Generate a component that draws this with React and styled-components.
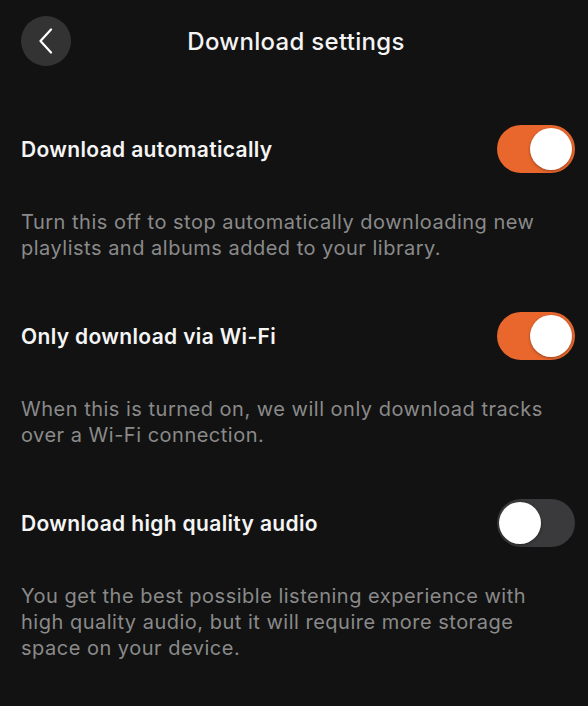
import { useState } from "react";
import styled, { createGlobalStyle } from "styled-components";

const GlobalStyle = createGlobalStyle`
  html, body {
    margin: 0;
    padding: 0;
    background: #121212;
  }
  body {
    font-family: Inter, "Noto Sans", sans-serif;
    -webkit-font-smoothing: antialiased;
  }
`;

/* ---------- header ---------- */

const Page = styled.div`
  min-height: 100vh;
  background: #121212;
  color: #fff;
  padding: 0 13px 0 21px;
  box-sizing: border-box;
`;

const Header = styled.header`
  height: 82px;
  display: grid;
  grid-template-columns: 50px 1fr 54px;
  align-items: center;
`;

const BackButton = styled.button`
  width: 50px;
  height: 50px;
  border-radius: 50%;
  border: none;
  background: #333333;
  display: grid;
  place-items: center;
  padding: 0;
  cursor: pointer;
`;

const Title = styled.h1`
  margin: 0;
  text-align: center;
  font-size: 24px;
  font-weight: 500;
  letter-spacing: 0.3px;
  color: #f4f4f4;
`;

/* ---------- settings ---------- */

const List = styled.div`
  display: flex;
  flex-direction: column;
  gap: 51px;
  padding-top: 43px;
`;

const Section = styled.section`
  display: flex;
  flex-direction: column;
  gap: 36px;
`;

const Row = styled.div`
  display: flex;
  align-items: center;
  justify-content: space-between;
  height: 48px;
`;

const Label = styled.span`
  font-size: 21px;
  font-weight: 600;
  letter-spacing: 0.35px;
  color: #f5f5f5;
`;

const Description = styled.p`
  margin: 0;
  font-size: 20px;
  line-height: 26px;
  letter-spacing: 0.5px;
  color: #8a8a8a;
  padding-right: 20px;
`;

const Track = styled.button`
  position: relative;
  width: 78px;
  height: 48px;
  border-radius: 24px;
  border: none;
  padding: 0;
  cursor: pointer;
  background: ${(p) => (p.$on ? "#e9672d" : "#3a3a3c")};
  transition: background 0.2s;
`;

const Knob = styled.span`
  position: absolute;
  top: 3px;
  left: ${(p) => (p.$on ? "33px" : "2px")};
  width: 42px;
  height: 42px;
  border-radius: 50%;
  background: #fff;
  box-shadow: 0 1px 3px rgba(0, 0, 0, 0.35);
  transition: left 0.2s;
`;

const Toggle = ({ on, onChange }) => (
  <Track $on={on} onClick={() => onChange(!on)} aria-pressed={on}>
    <Knob $on={on} />
  </Track>
);

const settings = [
  {
    key: "auto",
    label: "Download automatically",
    text: "Turn this off to stop automatically downloading new playlists and albums added to your library.",
  },
  {
    key: "wifi",
    label: "Only download via Wi-Fi",
    text: "When this is turned on, we will only download tracks over a Wi-Fi connection.",
  },
  {
    key: "hq",
    label: "Download high quality audio",
    text: "You get the best possible listening experience with high quality audio, but it will require more storage space on your device.",
  },
];

export default function App() {
  const [values, setValues] = useState({ auto: true, wifi: true, hq: false });

  return (
    <Page>
      <GlobalStyle />
      <Header>
        <BackButton aria-label="Back">
          <svg width="16" height="26" viewBox="0 0 16 26" fill="none">
            <path
              d="M13 1.5 L2.5 13 L13 24.5"
              stroke="#fff"
              strokeWidth="2.2"
              strokeLinecap="round"
              strokeLinejoin="round"
            />
          </svg>
        </BackButton>
        <Title>Download settings</Title>
        <span />
      </Header>

      <List>
        {settings.map((s) => (
          <Section key={s.key}>
            <Row>
              <Label>{s.label}</Label>
              <Toggle
                on={values[s.key]}
                onChange={(v) => setValues({ ...values, [s.key]: v })}
              />
            </Row>
            <Description>{s.text}</Description>
          </Section>
        ))}
      </List>
    </Page>
  );
}
